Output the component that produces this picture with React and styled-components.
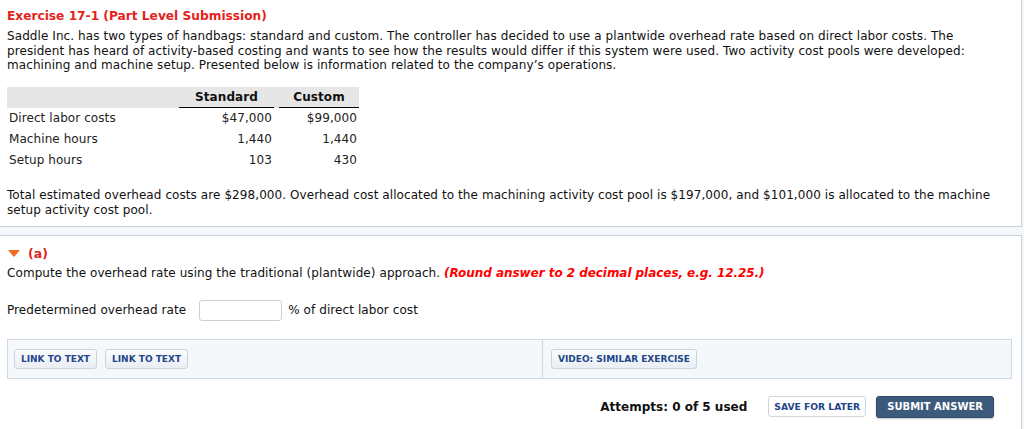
import React from "react";
import styled, { createGlobalStyle } from "styled-components";

const Global = createGlobalStyle`
  html, body { margin: 0; padding: 0; }
  body {
    background: #f4f7fa;
    font-family: "DejaVu Sans", Verdana, sans-serif;
    color: #111;
    width: 1024px;
    overflow: hidden;
  }
`;

const Page = styled.div`
  width: 1022px;
  display: flex;
  flex-direction: column;
  gap: 8px;
`;

const Panel = styled.section`
  background: #fff;
  border-right: 1px solid #c9d2dd;
  border-bottom: ${(p) => (p.$open ? "none" : "1px solid #c9d2dd")};
  border-top: ${(p) => (p.$top ? "1px solid #c9d2dd" : "none")};
  padding: ${(p) => p.$pad};
  display: flex;
  flex-direction: column;
`;

const Title = styled.h1`
  margin: 0;
  font-size: 12.2px;
  line-height: 16px;
  font-weight: bold;
  color: #e3231b;
`;

const Para = styled.p`
  margin: ${(p) => p.$m || "0"};
  font-size: 12px;
  line-height: ${(p) => p.$lh || "14.5px"};
  letter-spacing: 0.08px;
`;

const Table = styled.div`
  margin-top: 14.5px;
  width: 352px;
  display: grid;
  grid-template-columns: 172px 95px 85px;
  font-size: 12px;
  letter-spacing: 0.08px;
`;

const HeadRow = styled.div`
  display: contents;
`;

const HeadCell = styled.div`
  background: #e6e6e6;
  height: 21px;
  display: flex;
  align-items: flex-end;
  justify-content: center;
`;

const HeadLabel = styled.div`
  font-weight: bold;
  width: ${(p) => p.$w}px;
  text-align: center;
  border-bottom: ${(p) => (p.$w ? "1px solid #000" : "none")};
  line-height: 20px;
  margin-left: ${(p) => p.$ml || 0}px;
`;

const Cell = styled.div`
  height: 21px;
  line-height: 21px;
  padding: 0 2px;
  text-align: ${(p) => (p.$num ? "right" : "left")};
  color: #222;
`;

const Question = styled.div`
  display: flex;
  align-items: center;
  gap: 8px;
  height: 16px;
  font-size: 12.5px;
  font-weight: bold;
  color: #e3231b;
`;

const Triangle = styled.span`
  display: inline-block;
  width: 0;
  height: 0;
  margin-left: 1px;
  border-left: 6px solid transparent;
  border-right: 6px solid transparent;
  border-top: 7px solid #f06a1f;
`;

const Red = styled.em`
  color: #ff0000;
  font-weight: bold;
  font-style: italic;
  letter-spacing: -0.05px;
`;

const InputRow = styled.div`
  margin-top: 19px;
  display: flex;
  align-items: center;
  font-size: 12px;
  letter-spacing: 0.08px;
  height: 21px;
`;

const Input = styled.input`
  box-sizing: border-box;
  width: 83px;
  height: 21px;
  margin: 0 6px 0 13px;
  border: 1px solid #cfcfcf;
  border-radius: 3px;
  background: #fff;
  padding: 0 4px;
`;

const LinkBox = styled.div`
  margin-top: 18px;
  width: 1003px;
  height: 38px;
  border: 1px solid #cdd6e1;
  background: #f5f8fb;
  display: grid;
  grid-template-columns: 534px 1fr;
`;

const LinkCell = styled.div`
  display: flex;
  align-items: center;
  gap: 8px;
  padding-left: ${(p) => p.$pl}px;
  border-left: ${(p) => (p.$divider ? "1px solid #cdd6e1" : "none")};
`;

const LinkButton = styled.button`
  height: 20px;
  padding: 0 6px;
  font-family: inherit;
  font-size: 9px;
  font-weight: bold;
  color: #23458a;
  background: linear-gradient(#fbfcfd, #e9eef4);
  border: 1px solid #cbd4de;
  border-radius: 3px;
  cursor: pointer;
`;

const Footer = styled.div`
  margin-top: 17px;
  display: flex;
  justify-content: flex-end;
  align-items: center;
  padding-right: 16px;
  height: 22px;
`;

const Attempts = styled.span`
  font-size: 12px;
  font-weight: bold;
  color: #111;
  margin-right: 21px;
`;

const SaveButton = styled.button`
  height: 21px;
  padding: 0 5px;
  margin-right: 10px;
  font-family: inherit;
  font-size: 9.2px;
  font-weight: bold;
  color: #23458a;
  background: #fff;
  border: 1px solid #cfd6de;
  border-radius: 3px;
`;

const SubmitButton = styled.button`
  height: 22px;
  padding: 0 10px;
  font-family: inherit;
  font-size: 10px;
  font-weight: bold;
  color: #fff;
  background: #3b5a7c;
  border: 1px solid #2f4b69;
  border-radius: 3px;
  box-shadow: 0 1px 2px rgba(0, 0, 0, 0.25);
`;

const rows = [
  ["Direct labor costs", "$47,000", "$99,000"],
  ["Machine hours", "1,440", "1,440"],
  ["Setup hours", "103", "430"],
];

export default function App() {
  return (
    <>
      <Global />
      <Page>
        <Panel $pad="8px 18px 7px 7px">
          <Title>Exercise 17-1 (Part Level Submission)</Title>
          <Para $m="5px 0 0 0">
            Saddle Inc. has two types of handbags: standard and custom. The controller has decided to use a
            plantwide overhead rate based on direct labor costs. The president has heard of activity-based costing
            and wants to see how the results would differ if this system were used. Two activity cost pools were
            developed: machining and machine setup. Presented below is information related to the company’s
            operations.
          </Para>
          <Table>
            <HeadRow>
              <HeadCell />
              <HeadCell>
                <HeadLabel $w={95}>Standard</HeadLabel>
              </HeadCell>
              <HeadCell>
                <HeadLabel $w={80} $ml={5}>Custom</HeadLabel>
              </HeadCell>
            </HeadRow>
            {rows.map((r) => (
              <React.Fragment key={r[0]}>
                <Cell>{r[0]}</Cell>
                <Cell $num>{r[1]}</Cell>
                <Cell $num>{r[2]}</Cell>
              </React.Fragment>
            ))}
          </Table>
          <Para $m="16.5px 0 0 0" $lh="15.5px">
            Total estimated overhead costs are $298,000. Overhead cost allocated to the machining activity cost
            pool is $197,000, and $101,000 is allocated to the machine setup activity cost pool.
          </Para>
        </Panel>
        <Panel $top $open $pad="10px 11px 20px 7px">
          <Question>
            <Triangle />
            (a)
          </Question>
          <Para $m="4.5px 0 0 0">
            Compute the overhead rate using the traditional (plantwide) approach.{" "}
            <Red>(Round answer to 2 decimal places, e.g. 12.25.)</Red>
          </Para>
          <InputRow>
            Predetermined overhead rate
            <Input type="text" />
            % of direct labor cost
          </InputRow>
          <LinkBox>
            <LinkCell $pl={6}>
              <LinkButton>LINK TO TEXT</LinkButton>
              <LinkButton>LINK TO TEXT</LinkButton>
            </LinkCell>
            <LinkCell $pl={8} $divider>
              <LinkButton>VIDEO: SIMILAR EXERCISE</LinkButton>
            </LinkCell>
          </LinkBox>
          <Footer>
            <Attempts>Attempts: 0 of 5 used</Attempts>
            <SaveButton>SAVE FOR LATER</SaveButton>
            <SubmitButton>SUBMIT ANSWER</SubmitButton>
          </Footer>
        </Panel>
      </Page>
    </>
  );
}
